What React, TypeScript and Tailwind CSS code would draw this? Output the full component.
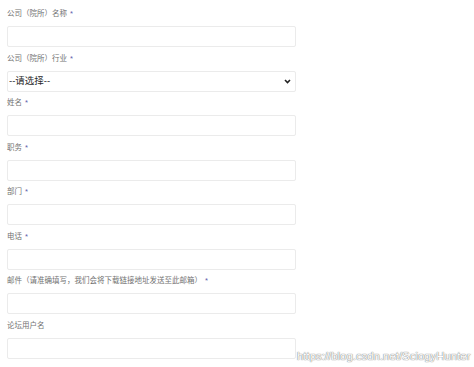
import React from 'react';

const FIELDS = [
  { label: '公司（院所）名称', required: true, type: 'input' },
  { label: '公司（院所）行业', required: true, type: 'select' },
  { label: '姓名', required: true, type: 'input' },
  { label: '职务', required: true, type: 'input' },
  { label: '部门', required: true, type: 'input' },
  { label: '电话', required: true, type: 'input' },
  { label: '邮件（请准确填写，我们会将下载链接地址发送至此邮箱）', required: true, type: 'input' },
  { label: '论坛用户名', required: false, type: 'input' },
];

export default function App() {
  return (
    <div
      className="relative w-[474px] h-[367px] bg-white overflow-hidden"
      style={{ fontFamily: '"Liberation Sans", "Noto Sans CJK SC", sans-serif' }}
    >
      <form className="pl-[7px] pt-[8px] w-[296px] flex flex-col">
        {FIELDS.map((field, i) => (
          <div key={i} className={i > 0 ? 'mt-[5.5px]' : ''}>
            {/* Label */}
            <label className="block h-[12px] leading-[12px] text-[7.5px] text-[#727272]">
              {field.label}
              {field.required && <span className="ml-[3px] text-[#5b5bab]">*</span>}
            </label>

            {/* Control */}
            {field.type === 'select' ? (
              <div className="relative mt-[6px] h-[21px]">
                <select className="appearance-none block box-border w-full h-[21px] py-0 pl-[1px] leading-none border border-[#ebebeb] rounded-[2px] bg-white text-[9.5px] text-[#2a2a2a] outline-none">
                  <option>--请选择--</option>
                </select>
                <svg
                  className="absolute right-[5px] top-[8px] w-[7px] h-[5px] pointer-events-none"
                  viewBox="0 0 7 5"
                  fill="none"
                  stroke="#222"
                  strokeWidth="1.6"
                >
                  <path d="M1 1l2.5 2.5L6 1" />
                </svg>
              </div>
            ) : (
              <input
                type="text"
                className="block box-border mt-[6px] w-full h-[21px] border border-[#ebebeb] rounded-[2px] bg-white outline-none"
              />
            )}
          </div>
        ))}
      </form>

      {/* Watermark */}
      <div className="absolute left-[297px] top-[349px] text-[11.4px] leading-[14px] text-white [text-shadow:0_0_1px_#7a7a7a,0_0_1px_#7a7a7a]">
        https://blog.csdn.net/SciogyHunter
      </div>
    </div>
  );
}
